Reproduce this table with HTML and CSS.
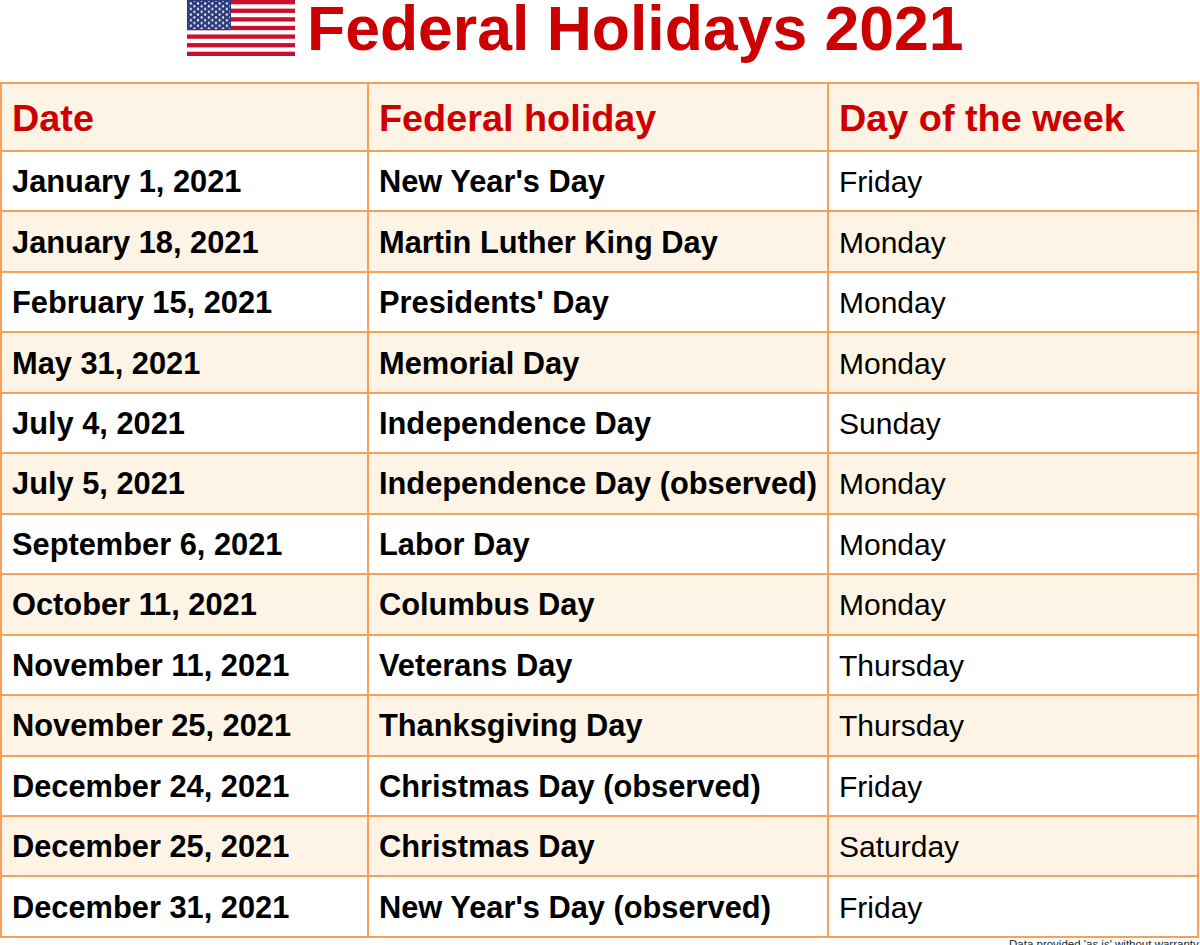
FILE: index.html
```html
<!DOCTYPE html>
<html>
<head>
<meta charset="utf-8">
<link rel="stylesheet" href="styles.css">
</head>
<body>
<header class="title">
  <svg class="flag" width="108" height="56" viewBox="0 0 108 56">
    <defs>
      <pattern id="stars" x="2" y="2" width="7.2" height="5.6" patternUnits="userSpaceOnUse">
        <circle cx="1.8" cy="1.4" r="1.1" fill="#fff"/>
        <circle cx="5.4" cy="4.2" r="1.1" fill="#fff"/>
      </pattern>
    </defs>
    <rect width="108" height="56" fill="#fff"/>
    <g fill="#c8102e">
      <rect y="0" width="108" height="4.31"/>
      <rect y="8.62" width="108" height="4.31"/>
      <rect y="17.23" width="108" height="4.31"/>
      <rect y="25.85" width="108" height="4.31"/>
      <rect y="34.46" width="108" height="4.31"/>
      <rect y="43.08" width="108" height="4.31"/>
      <rect y="51.69" width="108" height="4.31"/>
    </g>
    <rect width="44" height="30.15" fill="#2b3a7a"/>
    <rect x="1" y="1" width="42" height="28" fill="url(#stars)"/>
  </svg>
  <h1>Federal Holidays 2021</h1>
</header>

<div class="grid">
  <div class="cell head">Date</div>
  <div class="cell head">Federal holiday</div>
  <div class="cell head">Day of the week</div>

  <div class="cell b">January 1, 2021</div><div class="cell b">New Year's Day</div><div class="cell">Friday</div>
  <div class="cell b alt">January 18, 2021</div><div class="cell b alt">Martin Luther King Day</div><div class="cell alt">Monday</div>
  <div class="cell b">February 15, 2021</div><div class="cell b">Presidents' Day</div><div class="cell">Monday</div>
  <div class="cell b alt">May 31, 2021</div><div class="cell b alt">Memorial Day</div><div class="cell alt">Monday</div>
  <div class="cell b">July 4, 2021</div><div class="cell b">Independence Day</div><div class="cell">Sunday</div>
  <div class="cell b alt">July 5, 2021</div><div class="cell b alt">Independence Day (observed)</div><div class="cell alt">Monday</div>
  <div class="cell b">September 6, 2021</div><div class="cell b">Labor Day</div><div class="cell">Monday</div>
  <div class="cell b alt">October 11, 2021</div><div class="cell b alt">Columbus Day</div><div class="cell alt">Monday</div>
  <div class="cell b">November 11, 2021</div><div class="cell b">Veterans Day</div><div class="cell">Thursday</div>
  <div class="cell b alt">November 25, 2021</div><div class="cell b alt">Thanksgiving Day</div><div class="cell alt">Thursday</div>
  <div class="cell b">December 24, 2021</div><div class="cell b">Christmas Day (observed)</div><div class="cell">Friday</div>
  <div class="cell b alt">December 25, 2021</div><div class="cell b alt">Christmas Day</div><div class="cell alt">Saturday</div>
  <div class="cell b">December 31, 2021</div><div class="cell b">New Year's Day (observed)</div><div class="cell">Friday</div>
</div>
<p class="note">Data provided 'as is' without warranty</p>
</body>
</html>
```

FILE: styles.css
```css
html, body {
  margin: 0;
  padding: 0;
  overflow: hidden;
  background: #fff;
  font-family: "Liberation Sans", Arial, sans-serif;
}

.title {
  height: 82px;
  display: flex;
  align-items: flex-start;
  padding-left: 187px;
  gap: 12px;
}

.flag {
  display: block;
}

.title h1 {
  margin: 0;
  font-size: 62.5px;
  line-height: 56px;
  font-weight: bold;
  color: #cc0000;
  white-space: nowrap;
}

.grid {
  display: grid;
  width: 1195px;
  grid-template-columns: 365px 458px 368px;
  grid-template-rows: 66px repeat(13, 58.46px);
  gap: 2px;
  padding: 2px;
  background: #f6a05a;
}

.cell {
  background: #fff;
  display: flex;
  align-items: center;
  padding-left: 10px;
  padding-top: 2px;
  font-size: 30px;
  color: #000;
  white-space: nowrap;
}

.cell.b {
  font-weight: bold;
  font-size: 30.8px;
}

.cell.alt,
.cell.head {
  background: #fdf4e5;
}

.cell.head {
  font-size: 37.8px;
  font-weight: bold;
  color: #cc0000;
}

.note {
  margin: 0;
  padding-left: 1009px;
  font-size: 11.5px;
  line-height: 13px;
  color: #222;
  white-space: nowrap;
}
```
